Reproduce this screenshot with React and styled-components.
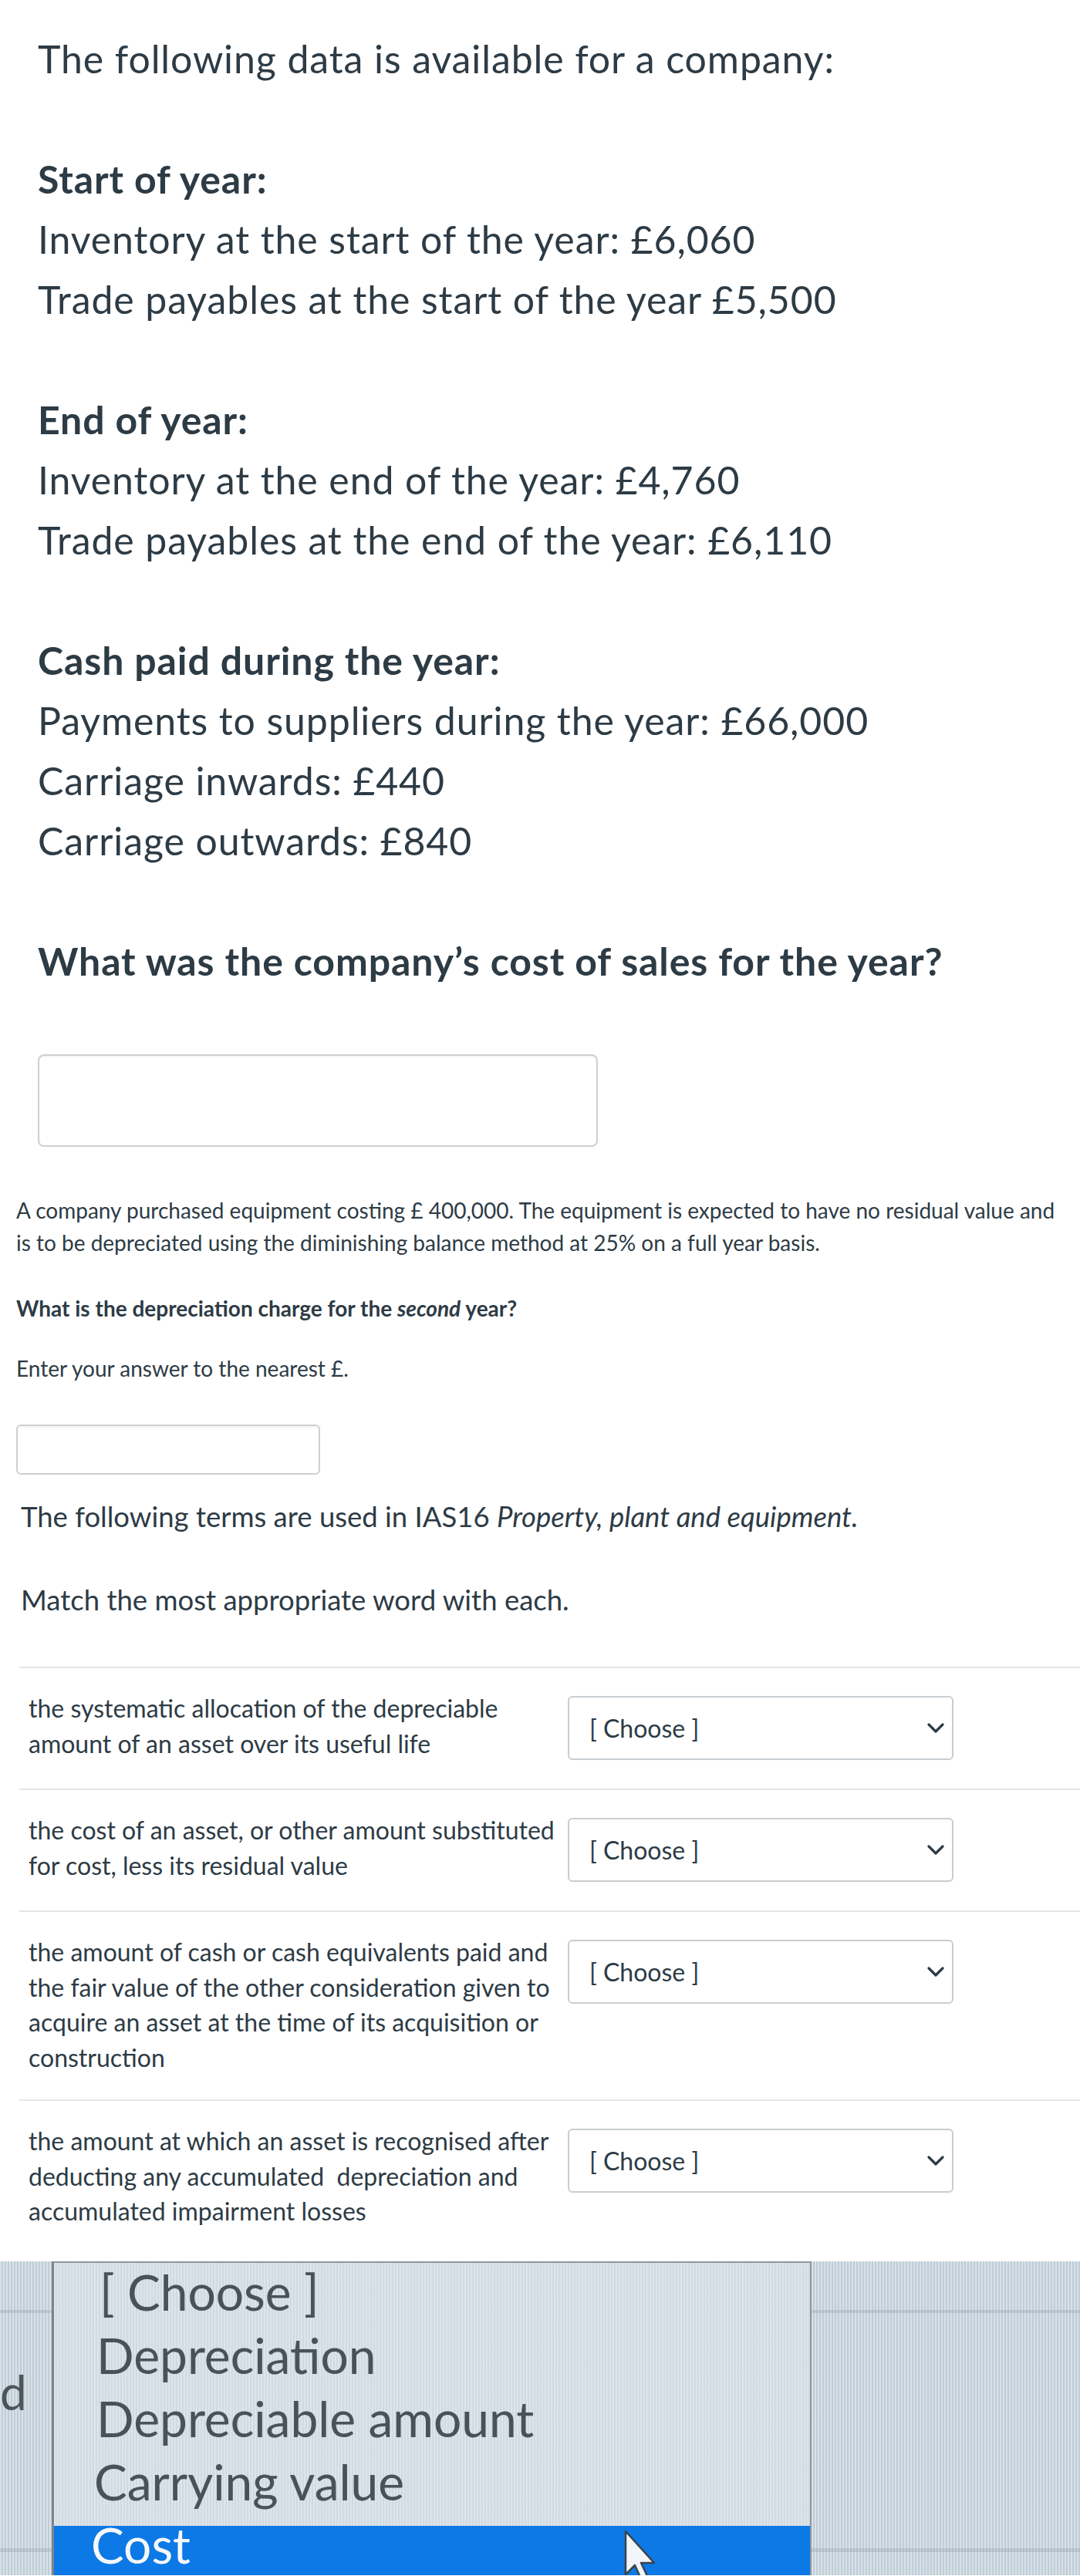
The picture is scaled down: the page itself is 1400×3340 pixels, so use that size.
import React from "react";
import styled, { createGlobalStyle } from "styled-components";

const GlobalStyle = createGlobalStyle`
  html, body {
    margin: 0;
    padding: 0;
    background: #ffffff;
  }
  body {
    font-family: Lato, "Open Sans", "Liberation Sans", sans-serif;
    color: #2d3b45;
  }
`;

const Page = styled.div`
  width: 1400px;
  overflow: hidden;
`;

/* ---------- question 1 ---------- */

const DataBlock = styled.section`
  padding: 37px 0 0 49px;
  font-size: 50px;
  letter-spacing: 0.9px;
  line-height: 78px;
`;

const Para = styled.p`
  margin: 0 0 ${(p) => (p.$last ? 0 : 78)}px;
`;

const Strong = styled.strong`
  font-weight: 700;
`;

const AnswerBox = styled.div`
  box-sizing: border-box;
  width: ${(p) => p.$w}px;
  height: ${(p) => p.$h}px;
  margin-top: ${(p) => p.$top}px;
  border: 2px solid #cdd0d3;
  border-radius: ${(p) => p.$r}px;
  background: #fff;
  box-shadow: inset 0 2px 2px rgba(0, 0, 0, 0.04);
`;

/* ---------- question 2 ---------- */

const SmallBlock = styled.section`
  padding: 61px 24px 0 21px;
  font-size: 28px;
  line-height: 42px;
`;

const SmallPara = styled.p`
  margin: ${(p) => p.$top || 0}px 0 0;
  font-weight: ${(p) => (p.$bold ? 700 : 400)};
`;

/* ---------- question 3 ---------- */

const MatchBlock = styled.section`
  padding: 28px 0 0 27px;
  font-size: 36.5px;
  line-height: 52px;
`;

const MatchPara = styled.p`
  margin: ${(p) => p.$top || 0}px 0 0;
`;

const RowList = styled.div`
  margin: 61px 0 0 25px;
  padding-bottom: 10px;
`;

const Row = styled.div`
  display: grid;
  grid-template-columns: 692px 500px;
  column-gap: 7px;
  align-items: start;
  border-top: 2px solid #e3e5e7;
  padding: 29px 0 32px 12px;
`;

const Term = styled.div`
  font-size: 32px;
  line-height: 45.5px;
  white-space: pre-wrap;
`;

const Select = styled.div`
  box-sizing: border-box;
  height: 83px;
  margin: 7px 0 5px;
  border: 2px solid #c7cdd1;
  border-radius: 6px;
  display: flex;
  align-items: center;
  justify-content: space-between;
  padding: 0 10px 0 26px;
  font-size: 32px;
  color: #2d3b45;
  background: #fff;
`;

const Chevron = () => (
  <svg width="22" height="14" viewBox="0 0 22 14" fill="none">
    <path d="M2 2 L11 11 L20 2" stroke="#2d3b45" strokeWidth="3.2" strokeLinecap="round" strokeLinejoin="round" />
  </svg>
);

/* ---------- photographed dropdown ---------- */

const Photo = styled.div`
  height: 407px;
  display: flex;
  background-color: #c9d6df;
  background-image:
    linear-gradient(to bottom, transparent 63px, rgba(150, 160, 168, 0.35) 63px, rgba(150, 160, 168, 0.35) 67px, transparent 67px, transparent 372px, rgba(150, 160, 168, 0.35) 372px, rgba(150, 160, 168, 0.35) 377px, transparent 377px),
    repeating-linear-gradient(to right, rgba(255, 255, 255, 0.28) 0 2px, rgba(120, 140, 155, 0.12) 2px 4px);
`;

const Sliver = styled.div`
  width: 67px;
  overflow: hidden;
  font-size: 62px;
  color: #4d555b;
  filter: blur(0.6px);
  padding-top: 138px;
  line-height: 62px;
`;

const Panel = styled.div`
  width: 985px;
  box-sizing: border-box;
  display: flex;
  flex-direction: column;
  border-left: 3px solid #7b858c;
  border-right: 2px solid #8d979e;
  border-top: 2px solid #8f989f;
  overflow: hidden;
  position: relative;
  background-color: #d6dfe5;
  background-image: repeating-linear-gradient(to right, rgba(255, 255, 255, 0.2) 0 2px, rgba(120, 140, 155, 0.06) 2px 4px);
`;

const OptionList = styled.div`
  flex: 1;
  display: flex;
  flex-direction: column;
  margin-top: -3px;
`;

const Option = styled.div`
  flex: ${(p) => (p.$active ? "1 0 80px" : "0 0 80px")};
  line-height: 82px;
  font-size: 64px;
  padding-left: ${(p) => p.$pad}px;
  color: ${(p) => (p.$active ? "#f4f8fc" : "#4a5258")};
  background: ${(p) => (p.$active ? "linear-gradient(to bottom, transparent 16px, #0c79e6 16px)" : "transparent")};
  text-shadow: 0 0 1px rgba(0, 0, 0, 0.15);
  filter: blur(0.5px);
`;

const Cursor = styled.svg`
  position: absolute;
  left: 738px;
  top: 346px;
`;

const terms = [
  "the systematic allocation of the depreciable amount of an asset over its useful life",
  "the cost of an asset, or other amount substituted for cost, less its residual value",
  "the amount of cash or cash equivalents paid and the fair value of the other consideration given to acquire an asset at the time of its acquisition or construction",
  "the amount at which an asset is recognised after deducting any accumulated  depreciation and accumulated impairment losses",
];

const options = [
  { label: "[ Choose ]", pad: 59 },
  { label: "Depreciation", pad: 55 },
  { label: "Depreciable amount", pad: 55 },
  { label: "Carrying value", pad: 52 },
  { label: "Cost", pad: 48, active: true },
];

export default function App() {
  return (
    <Page>
      <GlobalStyle />
      <DataBlock>
        <Para>The following data is available for a company:</Para>
        <Para>
          <Strong>Start of year:</Strong>
          <br />
          Inventory at the start of the year: £6,060
          <br />
          Trade payables at the start of the year £5,500
        </Para>
        <Para>
          <Strong>End of year:</Strong>
          <br />
          Inventory at the end of the year: £4,760
          <br />
          Trade payables at the end of the year: £6,110
        </Para>
        <Para>
          <Strong>Cash paid during the year:</Strong>
          <br />
          Payments to suppliers during the year: £66,000
          <br />
          Carriage inwards: £440
          <br />
          Carriage outwards: £840
        </Para>
        <Para $last>
          <Strong>What was the company’s cost of sales for the year?</Strong>
        </Para>
        <AnswerBox $w={726} $h={120} $r={8} $top={82} />
      </DataBlock>

      <SmallBlock>
        <SmallPara>
          A company purchased equipment costing £ 400,000. The equipment is expected to have no residual value and is
          to be depreciated using the diminishing balance method at 25% on a full year basis.
        </SmallPara>
        <SmallPara $bold $top={43}>
          What is the depreciation charge for the <em>second</em> year?
        </SmallPara>
        <SmallPara $top={36}>Enter your answer to the nearest £.</SmallPara>
        <AnswerBox $w={394} $h={65} $r={6} $top={52} />
      </SmallBlock>

      <MatchBlock>
        <MatchPara>
          The following terms are used in IAS16 <em>Property, plant and equipment.</em>
        </MatchPara>
        <MatchPara $top={56}>Match the most appropriate word with each.</MatchPara>
      </MatchBlock>

      <RowList>
        {terms.map((t) => (
          <Row key={t}>
            <Term>{t}</Term>
            <Select>
              <span>[ Choose ]</span>
              <Chevron />
            </Select>
          </Row>
        ))}
      </RowList>

      <Photo>
        <Sliver>d</Sliver>
        <Panel>
          <OptionList>
            {options.map((o) => (
              <Option key={o.label} $pad={o.pad} $active={o.active}>
                {o.label}
              </Option>
            ))}
          </OptionList>
          <Cursor width="44" height="70" viewBox="0 0 44 70">
            <path d="M3 2 L3 58 L15 46 L24 66 L32 62 L23 43 L40 43 Z" fill="#f2f6fa" stroke="#3c444a" strokeWidth="2.5" strokeLinejoin="round" />
          </Cursor>
        </Panel>
      </Photo>
    </Page>
  );
}
